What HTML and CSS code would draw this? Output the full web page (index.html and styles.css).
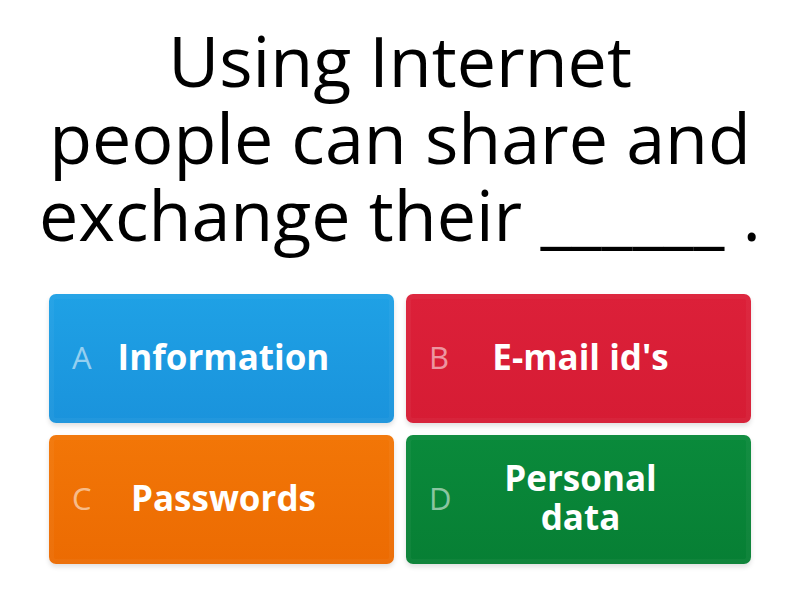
FILE: index.html
```html
<!DOCTYPE html>
<html>
<head>
<meta charset="utf-8">
<link rel="stylesheet" href="styles.css">
</head>
<body>
<div class="page">
  <div class="question">Using Internet<br>people can share and<br>exchange their ______ .</div>
  <div class="answers">
    <div class="answer blue"><span class="key">A</span><span class="text">Information</span></div>
    <div class="answer red"><span class="key">B</span><span class="text">E-mail id's</span></div>
    <div class="answer orange"><span class="key">C</span><span class="text">Passwords</span></div>
    <div class="answer green"><span class="key">D</span><span class="text">Personal<br>data</span></div>
  </div>
</div>
</body>
</html>
```
FILE: styles.css
```css
html, body {
  margin: 0;
  padding: 0;
  background: #ffffff;
}
body {
  width: 800px;
  height: 600px;
  overflow: hidden;
  font-family: "Open Sans", "DejaVu Sans", sans-serif;
}
.page {
  display: flex;
  flex-direction: column;
  align-items: center;
}
.question {
  width: 760px;
  margin-top: 22px;
  height: 260px;
  font-size: 70px;
  line-height: 77px;
  text-align: center;
  color: #000;
}
.answers {
  display: grid;
  grid-template-columns: 345px 345px;
  grid-auto-rows: 129px;
  gap: 12px;
  margin-top: 12px;
}
.answer {
  position: relative;
  border-radius: 7px;
  display: flex;
  align-items: center;
  justify-content: center;
  color: #fff;
  padding-bottom: 5px;
  box-sizing: border-box;
  box-shadow: inset 0 0 0 5px rgba(255,255,255,0.04), 0 3px 5px rgba(0,0,0,0.12);
}
.blue { background: linear-gradient(#1fa1e5, #1a93dc); }
.red { background: linear-gradient(#dc2039, #d61c34); }
.orange { background: linear-gradient(#f27607, #ec6b02); }
.green { background: linear-gradient(#0a8a3b, #077f34); }
.key {
  position: absolute;
  left: 23px;
  top: 50%;
  transform: translateY(-55%);
  font-size: 31px;
  font-weight: 400;
  color: rgba(255,255,255,0.55);
}
.text {
  font-size: 35px;
  font-weight: 700;
  line-height: 39px;
  text-align: center;
  padding-left: 4px;
}
```
